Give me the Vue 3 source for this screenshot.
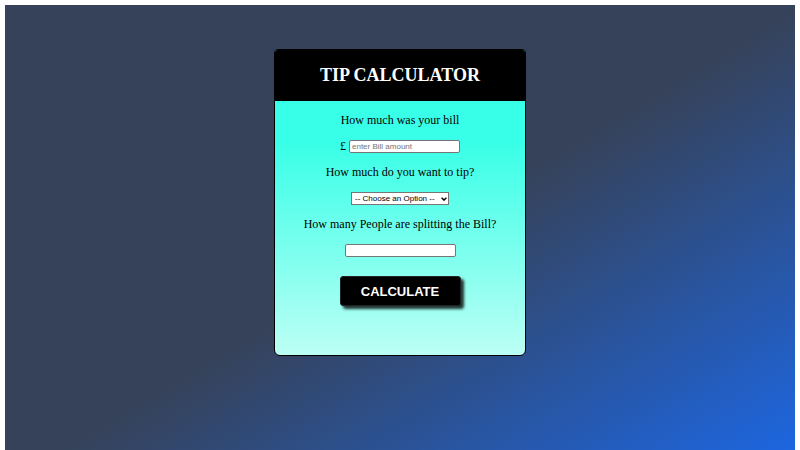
<template>
  <div class="page">
    <form class="calculator" @submit.prevent="calculate">
      <h1 class="title">TIP CALCULATOR</h1>

      <div class="fields">
        <!-- bill -->
        <label class="question" for="bill">How much was your bill</label>
        <div class="control">
          <span class="currency">£</span>
          <input
            id="bill"
            v-model="bill"
            class="box"
            type="text"
            placeholder="enter Bill amount"
          />
        </div>

        <!-- tip -->
        <label class="question" for="tip">How much do you want to tip?</label>
        <div class="control">
          <div class="choice-wrapper">
            <select id="tip" v-model="tip" class="choice">
              <option disabled value="0">-- Choose an Option --</option>
              <option v-for="rate in rates" :key="rate" :value="rate">
                {{ rate }}%
              </option>
            </select>
            <svg class="arrow" viewBox="0 0 6 4" aria-hidden="true">
              <path
                d="M0.6 0.7 L3 3.1 L5.4 0.7"
                fill="none"
                stroke="black"
                stroke-width="1.4"
              />
            </svg>
          </div>
        </div>

        <!-- people -->
        <label class="question" for="people"
          >How many People are splitting the Bill?</label
        >
        <div class="control">
          <input id="people" v-model="people" class="box" type="text" />
        </div>

        <button class="calculate" type="submit">CALCULATE</button>
        <output v-if="total" class="total">£{{ total }} each</output>
      </div>
    </form>
  </div>
</template>

<script setup>
import { ref } from "vue";

const rates = [5, 10, 15, 20, 25];

const bill = ref("");
const tip = ref("0");
const people = ref("");
const total = ref("");

const calculate = () => {
  const amount = Number(bill.value);
  const share = Number(people.value) || 1;
  if (!amount) return;

  total.value = ((amount * (1 + Number(tip.value) / 100)) / share).toFixed(2);
};
</script>

<style>
body {
  background: white;
}
</style>

<style scoped>
.page {
  box-sizing: border-box;
  min-height: calc(100vh - 5px);
  margin: 5px 5px 0;
  padding: 44px 16px;
  background: linear-gradient(149deg, #364259 52%, #1d66e0);
  font-family: "Liberation Serif", "Times New Roman", serif;
}

.calculator {
  box-sizing: border-box;
  max-width: 252px;
  margin: 0 auto;
  overflow: hidden;
  border: 1px solid black;
  border-radius: 4px 4px 6px 6px;
  background: linear-gradient(#38ffe7 30%, #bcfff5);
}

.title {
  margin: 0;
  padding: 14px 0 15px;
  background: black;
  color: white;
  font-size: 18px;
  line-height: 22px;
  text-align: center;
}

.fields {
  display: flex;
  flex-direction: column;
  align-items: center;
  padding: 12px 8px 49px;
}

.question {
  font-size: 12px;
  line-height: 14px;
}

.control {
  display: flex;
  align-items: center;
  gap: 3px;
  height: 14px;
  margin: 12px 0;
}

.currency {
  font-size: 12px;
  line-height: 14px;
}

.box,
.choice {
  box-sizing: border-box;
  height: 13px;
  margin: 0;
  border: 1px solid #767676;
  border-radius: 2px;
  background: white;
  color: black;
  font-family: "Liberation Sans", Arial, sans-serif;
  font-size: 8px;
}

.box {
  width: 111px;
  padding: 0 2px;
}

.box::placeholder {
  color: #757575;
}

.choice-wrapper {
  display: flex;
  position: relative;
}

.choice {
  width: 98px;
  padding: 0 10px 0 3px;
  border-radius: 0;
  appearance: none;
}

/* sits over the right end of the drop-down */
.arrow {
  position: absolute;
  top: 5px;
  right: 2px;
  width: 6px;
  height: 4px;
  pointer-events: none;
}

.calculate {
  width: 121px;
  height: 30px;
  margin-top: 7px;
  padding: 0;
  border: 1px solid #222222;
  border-radius: 3px;
  background: black;
  box-shadow: 3px 3px 3px rgba(0, 0, 0, 0.8);
  color: white;
  font-family: "Liberation Sans", Arial, sans-serif;
  font-size: 13px;
  font-weight: bold;
  cursor: pointer;
}

.total {
  margin-top: 12px;
  font-size: 12px;
  line-height: 14px;
}
</style>
